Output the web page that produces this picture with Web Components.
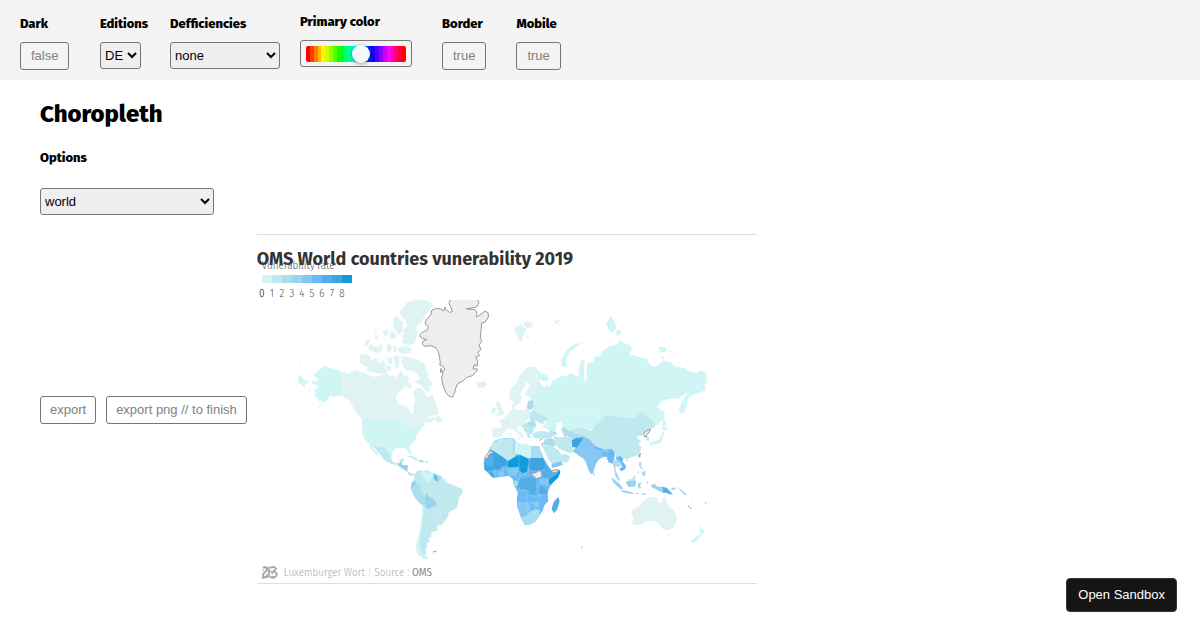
<!DOCTYPE html>
<html lang="en">
<head>
<meta charset="utf-8">
<meta name="viewport" content="width=device-width, initial-scale=1">
<title>Choropleth</title>
<style>
    body {
        margin: 0;
        font-family: "Fira Sans", Lato, sans-serif;
        color: #000;
        background: #fff;
        --button-font: 13px "Liberation Sans", Arial, sans-serif;
    }
</style>
</head>
<body>
<demo-page>
    <tool-bar slot="toolbar">
        <tool-field label="Dark" class="short" spaced><ui-button>false</ui-button></tool-field>
        <tool-field label="Editions" class="short"><ui-select label="Editions" options="DE,FR,EN"></ui-select></tool-field>
        <tool-field label="Defficiencies"><ui-select label="Defficiencies" options="none,protanopia,deuteranopia" style="width: 110px"></ui-select></tool-field>
        <tool-field label="Primary color" spaced raised><hue-slider value="56"></hue-slider></tool-field>
        <tool-field label="Border" spaced><ui-button>true</ui-button></tool-field>
        <tool-field label="Mobile" spaced><ui-button>true</ui-button></tool-field>
    </tool-bar>
    <ui-select slot="options" label="Map" options="world,europe,luxembourg" style="width: 174px"></ui-select>
    <ui-button slot="actions" tight>export</ui-button>
    <ui-button slot="actions" tight>export png // to finish</ui-button>
    <chart-frame slot="chart" heading="OMS World countries vunerability 2019" source="OMS">
        <color-legend slot="legend" label="Vunerability rate"></color-legend>
        <world-map></world-map>
    </chart-frame>
    <sandbox-button slot="floating"></sandbox-button>
</demo-page>

<script>
const SCALE = ['#d0f5f5', '#bfe9ef', '#abdeed', '#9bd2ef', '#84c8f3', '#6bbaf5', '#55ade8', '#3ca4e0', '#109bdb'];

class DemoPage extends HTMLElement {
    constructor() {
        super();
        this.attachShadow({ mode: 'open' });
        this.shadowRoot.innerHTML = `
            <style>
                :host { display: block; }
                main { padding: 20px 40px; }
                h1 { margin: 0; font-size: 24px; line-height: 28px; font-weight: 800; }
                h2 { margin: 20px 0; font-size: 13px; line-height: 20px; font-weight: 800; }
                .row { display: flex; align-items: center; gap: 10px; margin-top: 19px; }
                .options { display: flex; }
                .actions { display: flex; flex: none; gap: 10px; padding-top: 2px; }
            </style>
            <slot name="toolbar"></slot>
            <main>
                <h1>Choropleth</h1>
                <h2>Options</h2>
                <div class="options"><slot name="options"></slot></div>
                <div class="row">
                    <div class="actions"><slot name="actions"></slot></div>
                    <slot name="chart"></slot>
                </div>
            </main>
            <slot name="floating"></slot>
        `;
    }
}

class ToolBar extends HTMLElement {
    constructor() {
        super();
        this.attachShadow({ mode: 'open' });
        this.shadowRoot.innerHTML = `
            <style>
                :host {
                    display: flex;
                    gap: 20px;
                    box-sizing: border-box;
                    min-height: 80px;
                    padding: 13px 20px 10px;
                    background: #f4f4f4;
                }
                ::slotted(.short) { width: 50px; }
            </style>
            <slot></slot>
        `;
    }
}

class ToolField extends HTMLElement {
    constructor() {
        super();
        this.attachShadow({ mode: 'open' });
        this.shadowRoot.innerHTML = `
            <style>
                :host { display: flex; flex-direction: column; align-items: flex-start; gap: 7px; }
                :host([spaced]) { margin-right: 10px; }
                :host([raised]) { margin-top: -2px; }
                span { font-size: 13px; line-height: 22px; font-weight: 800; white-space: nowrap; }
            </style>
            <span></span>
            <slot></slot>
        `;
    }

    connectedCallback() {
        this.shadowRoot.querySelector('span').textContent = this.getAttribute('label');
    }
}

class UiButton extends HTMLElement {
    constructor() {
        super();
        this.attachShadow({ mode: 'open' });
        this.shadowRoot.innerHTML = `
            <style>
                :host { display: block; flex: none; }
                button {
                    display: block;
                    height: 28px;
                    padding: 0 10px 2px;
                    font: var(--button-font);
                    color: #808080;
                    background: transparent;
                    border: 1px solid #767676;
                    border-radius: 3px;
                    cursor: pointer;
                }
                :host([tight]) button { padding: 0 9px 2px; }
                button:hover { color: #333; }
            </style>
            <button type="button"><slot></slot></button>
        `;
    }
}

class UiSelect extends HTMLElement {
    constructor() {
        super();
        this.attachShadow({ mode: 'open' });
        this.shadowRoot.innerHTML = `
            <style>
                :host { display: block; }
                select {
                    display: block;
                    width: 100%;
                    height: 27px;
                    font: 13px "Liberation Sans", Arial, sans-serif;
                    color: #000;
                    background: #efefef;
                    border: 1px solid #767676;
                    border-radius: 3px;
                }
            </style>
            <select></select>
        `;
    }

    connectedCallback() {
        const select = this.shadowRoot.querySelector('select');
        select.setAttribute('aria-label', this.getAttribute('label'));
        this.getAttribute('options').split(',').forEach(name => select.add(new Option(name)));
    }
}

class HueSlider extends HTMLElement {
    constructor() {
        super();
        this.attachShadow({ mode: 'open' });
        // banded rainbow: one hard-edged stop pair per hue step
        const steps = 26;
        const stops = Array.from({ length: steps }, (_, i) =>
            `hsl(${i * 360 / (steps - 1)} 100% 50%) ${i * 100 / steps}% ${(i + 1) * 100 / steps}%`);
        this.shadowRoot.innerHTML = `
            <style>
                :host {
                    display: flex;
                    align-items: center;
                    box-sizing: border-box;
                    width: 112px;
                    height: 27px;
                    padding: 0 5px;
                    border: 1px solid #767676;
                    border-radius: 3px;
                }
                input {
                    appearance: none;
                    width: 100%;
                    height: 16px;
                    margin: 0;
                    border-radius: 2px;
                    background: linear-gradient(to right, ${stops.join(', ')});
                }
                input::-webkit-slider-thumb {
                    appearance: none;
                    width: 18px;
                    height: 18px;
                    border-radius: 50%;
                    background: #f8f8f8;
                    box-shadow: 0 1px 4px rgba(0, 0, 0, 0.37);
                }
            </style>
            <input type="range" min="0" max="100" aria-label="Primary color">
        `;
    }

    connectedCallback() {
        this.shadowRoot.querySelector('input').value = this.getAttribute('value');
    }
}

class ChartFrame extends HTMLElement {
    constructor() {
        super();
        this.attachShadow({ mode: 'open' });
        this.shadowRoot.innerHTML = `
            <style>
                :host { display: block; flex: 0 1 500px; min-width: 0; }
                figure {
                    position: relative;
                    margin: 0;
                    border-top: 1px solid #ddd;
                    border-bottom: 1px solid #ddd;
                }
                h3 { margin: 0; padding: 12px 0 29px; font-size: 18px; line-height: 24px; font-weight: 700; color: #333; }
                /* the legend lies over the heading */
                .legend { position: absolute; top: 24px; left: 0; }
                figcaption {
                    display: flex;
                    align-items: center;
                    padding: 5px 4px 3px;
                    font-family: "Fira Sans Condensed", "Fira Sans", sans-serif;
                    font-size: 11px;
                    line-height: 15px;
                    font-weight: 300;
                    color: #aaa;
                }
                figcaption svg { width: 17px; height: 13px; margin-right: 6px; }
                b { font-weight: 400; color: #888; }
                i { font-style: normal; color: #bfe9ef; }
            </style>
            <figure>
                <h3></h3>
                <div class="legend"><slot name="legend"></slot></div>
                <slot></slot>
                <figcaption>
                    <svg viewBox="0 0 17 13" fill="none" stroke="#aaa" stroke-width="2" aria-hidden="true">
                        <path d="M2 2C5 0 7 2 5 5C4 7 2 7 2 9C2 12 6 12 8 9M8 1C6 3 9 5 8 8C7 11 4 11 1 12M9 2C12 0 16 1 14 4C13 6 11 5 11 7M11 6C16 5 17 9 14 11C12 12 10 12 9 10M12 12V10"/>
                        <path d="M1 4H3M5 8L9 12M15 2L16 3M5 3L9 6M9 4L12 9" stroke-width="1"/>
                    </svg>
                    <span>Luxemburger Wort <i>|</i> Source : <b></b></span>
                </figcaption>
            </figure>
        `;
    }

    connectedCallback() {
        this.shadowRoot.querySelector('h3').textContent = this.getAttribute('heading');
        this.shadowRoot.querySelector('b').textContent = this.getAttribute('source');
    }
}

class ColorLegend extends HTMLElement {
    constructor() {
        super();
        this.attachShadow({ mode: 'open' });
        this.shadowRoot.innerHTML = `
            <style>
                :host {
                    display: block;
                    font-family: "Fira Sans Condensed", "Fira Sans", sans-serif;
                    font-size: 11px;
                    font-weight: 300;
                    color: #555;
                }
                p { margin: 0 5px; line-height: 14px; }
                .bar { display: flex; margin: 2px 5px 0; }
                .bar span { width: 10px; height: 8px; }
                .ticks { display: flex; margin-top: 5px; line-height: 12px; }
                .ticks span { width: 10px; text-align: center; }
                .ticks span:first-child { color: #000; }
            </style>
            <p></p>
            <div class="bar">${SCALE.map(c => `<span style="background: ${c}"></span>`).join('')}</div>
            <div class="ticks">${SCALE.map((c, i) => `<span>${i}</span>`).join('')}</div>
        `;
    }

    connectedCallback() {
        this.shadowRoot.querySelector('p').textContent = this.getAttribute('label');
    }
}

class WorldMap extends HTMLElement {
    constructor() {
        super();
        this.attachShadow({ mode: 'open' });
        this.shadowRoot.innerHTML = `
            <style>
                :host { display: block; }
                svg { display: block; width: 100%; height: auto; }
                .c0 { fill: #e0f3f3; }
                ${SCALE.map((c, i) => `.c${i + 1} { fill: ${c}; }`).join('\n')}
                .na { fill: #eee; stroke: #999; stroke-width: 3; }
                .line { fill: none; stroke: #fff; stroke-opacity: 0.3; stroke-width: 2; }
                .sea { fill: #fff; }
            </style>
            <svg viewBox="0 0 500 260" role="img" aria-label="World map of vulnerability by country">
                <g transform="translate(-256 -300)">
                    <!-- Alaska, Canada and the arctic islands -->
                    <g transform="translate(290 295) scale(.33333)">
                        <path class="c1" d="M22 237L32 245 40 255 52 258 50 266 40 268 45 276 36 274 28 266 22 268ZM22 211L30 213 26 217ZM52 284L60 284 56 290ZM102 213L116 220 128 222 154 229 154 305 145 302 132 306 122 304 118 300 112 312 104 320 96 322 88 332 78 341 74 342 88 330 98 318 84 318 78 308 70 300 74 290 66 284 82 280 84 272 64 266 62 260 76 258 82 254 76 246 66 238 76 232 84 224 92 218Z"/>
                        <path class="c0" d="M155 229L170 238 180 230 198 225 206 230 222 234 236 240 246 246 258 244 272 240 286 236 296 242 306 240 316 248 322 240 330 226 336 236 340 244 350 240 354 252 350 262 342 268 340 276 326 290 316 300 314 312 320 322 330 330 344 334 352 340 356 352 364 358 368 348 366 334 372 322 372 312 368 300 368 290 372 284 380 278 392 282 402 292 404 304 414 306 424 298 428 310 436 330 444 350 442 357 432 362 424 360 412 366 404 374 416 368 432 370 440 362 450 368 455 378 442 384 436 376 428 376 420 384 404 382 392 390 380 393 372 398 360 406 352 402 350 390 338 382 322 376 310 372 220 372 212 374 200 358 190 342 180 325 170 312 155 305Z"/>
                        <path class="c0" d="M330 60L324 50 336 38 346 24 360 17 380 15 404 16 420 22 424 34 416 46 404 58 396 72 392 84 380 88 376 100 380 112 376 128 370 144 358 150 340 148 332 142 338 130 330 124 340 116 334 108 342 98 350 92 342 84 346 76 336 68ZM308 66L318 62 328 74 338 86 334 104 330 116 322 118 312 104 306 88Z"/>
                        <path class="c0" d="M208 180L226 176 240 186 236 196 252 190 262 196 266 206 272 196 280 200 284 208 280 218 290 224 286 236 270 236 256 234 240 232 226 226 232 216 214 210 206 200ZM232 156L240 146 246 156 256 152 262 158 268 144 274 156 270 172 252 174 244 166 234 168ZM218 150L226 136 238 132 234 144 226 154ZM274 110L290 102 292 116 282 124ZM296 116L304 104 318 124 306 134 298 128ZM286 150L300 146 302 166 290 172ZM306 154L316 150 316 172 308 170ZM318 160L340 152 360 158 362 172 340 176 322 172ZM286 190L302 186 306 204 296 210ZM308 186L322 180 326 200 322 220 312 216ZM250 112L260 114 258 120 250 118ZM252 126L262 124 262 132 252 132ZM284 212L298 212 302 224 290 226Z"/>
                        <path class="c0" d="M332 184L350 186 366 190 384 196 400 206 404 222 414 236 410 248 422 260 424 270 414 276 418 288 410 292 400 282 388 270 376 264 370 258 382 254 388 246 378 238 370 232 356 226 344 224 336 214 330 200ZM342 262L354 262 366 276 352 280 344 276Z"/>
                    </g>
                    <!-- Greenland, Iceland and north west Europe -->
                    <g transform="translate(410 295) scale(.33333)">
                        <path class="na" d="M120 5L114 26 120 38 124 50 116 52 104 44 102 36 98 48 90 42 76 40 62 46 60 58 54 66 46 74 42 86 52 94 50 104 34 112 24 122 34 130 48 134 36 138 34 148 42 154 60 152 74 158 82 170 86 190 88 204 86 210 96 214 102 222 96 230 88 232 90 220 96 234 92 250 96 270 104 292 112 302 124 307 130 296 134 280 140 266 156 258 166 248 184 242 194 232 200 222 186 222 190 208 198 214 200 196 194 186 206 182 200 172 210 164 204 150 212 140 208 130 210 106 212 84 222 82 232 66 232 54 222 48 210 58 196 66 198 52 192 44 166 42 196 36 204 24 196 5Z"/>
                        <path class="c0" d="M312 92L322 94 328 86 338 96 346 104 340 116 334 128 332 142 324 136 318 120 310 106ZM336 84L350 78 364 84 366 94 354 100 344 98ZM346 122L354 120 354 130 348 130ZM192 262L200 266 208 260 224 260 228 268 222 276 208 280 196 276 200 271Z"/>
                        <path class="c0" d="M294 296L302 280 314 268 322 250 334 232 346 220 360 215 376 216 380 226 374 236 378 260 380 280 374 298 360 308 346 304 342 294 352 280 356 266 346 262 340 276 330 290 328 300 334 308 326 324 316 334 308 330 304 316 296 312ZM302 328L312 324 310 344 302 340ZM256 318L266 320 270 334 278 350 280 358 262 364 256 360 264 350 258 340 254 328Z"/>
                        <path class="c1" d="M244 340L254 338 252 354 242 356Z"/>
                    </g>
                    <!-- Russia and Kazakhstan -->
                    <g transform="translate(540 310) scale(.33333)">
                        <path class="c1" d="M-14 178L0 188 18 196 24 206 20 214 4 212 -6 208 -2 220 8 232 20 226 26 232 36 210 48 206 64 198 78 198 90 188 100 196 112 198 118 206 112 180 120 152 130 150 130 170 130 190 130 216 138 208 136 180 140 158 158 158 160 140 178 138 184 122 204 110 216 104 230 104 236 88 246 98 258 102 270 108 272 124 262 134 280 136 296 142 318 146 322 158 330 168 344 170 366 152 388 156 402 168 430 174 450 186 470 188 478 180 496 190 498 214 490 224 494 240 480 246 466 250 448 258 440 268 438 286 428 308 418 312 414 296 420 280 430 264 442 246 424 258 410 266 384 266 362 274 348 292 356 298 368 308 366 326 352 344 342 346 330 330 200 340 158 356 128 364 100 366 84 370 70 352 56 340 44 350 46 362 30 362 4 352 20 330 -10 320 -26 300 -34 284 -30 260 -16 244 -12 210Z"/>
                        <path class="c1" d="M62 166L60 150 68 134 80 118 94 106 116 98 118 102 100 114 86 126 76 144 74 158 80 172 68 172ZM196 38L210 18 220 32 226 54 218 68 204 62ZM226 66L234 56 242 70 226 80ZM352 110L374 112 378 124 358 128ZM382 120L396 124 384 126ZM360 142L370 140 370 146 360 146ZM492 168L498 168 497 174ZM364 300L371 306 370 330 378 344 366 350 364 330ZM38 30L46 34 60 28 54 36 46 42Z"/>
                        <path class="line" stroke-dasharray="8 4" d="M44 330L56 314 72 318 76 302 96 304 120 292 140 302 158 302 166 318 190 326"/>
                    </g>
                    <!-- Asia and Oceania -->
                    <g transform="translate(580 400) scale(.33333)">
                        <path class="c2" d="M-40 92L0 84 32 92 40 80 56 66 64 54 80 46 98 50 118 52 134 54 158 54 172 46 180 34 192 42 204 56 220 66 222 82 210 88 204 94 192 100 180 108 166 108 172 118 182 124 172 132 182 142 176 158 166 168 150 172 138 178 128 174 116 170 104 166 96 150 84 148 68 150 48 142 36 130 24 116 -10 116 -30 110Z"/>
                        <path class="line" stroke-dasharray="8 4" d="M64 58L74 76 100 86 126 90 146 84 164 72 160 58M32 92L-10 98"/>
                        <path class="c5" d="M-24 154L-10 132 0 126 6 110 24 116 36 130 48 142 62 148 76 148 90 146 84 158 78 170 70 170 56 176 46 190 40 206 36 220 30 222 22 210 16 190 8 176 0 172Z"/>
                        <path class="c6" d="M38 138L64 146 64 152 40 144ZM64 154L76 158 78 172 66 168ZM80 152L92 146 100 156 102 168 98 182 102 196 98 196 94 190 84 188 78 176ZM104 170L118 168 128 176 124 184 134 196 134 206 122 214 114 206 124 200 118 188 108 182Z"/>
                        <path class="c3" d="M96 184L106 178 116 184 120 196 112 202 104 198 104 212 110 222 118 240 114 244 104 232 100 214ZM36 216L42 222 40 228 36 226ZM174 186L182 188 180 200 188 208 180 206 174 198ZM182 216L194 212 192 230 184 224ZM168 220L174 210 172 220Z"/>
                        <path class="c4" d="M90 232L102 240 114 250 126 264 122 270 108 258 96 246ZM122 270L140 274 158 278 156 282 138 280 122 275ZM164 279L172 279 172 282 164 282ZM178 281L198 279 188 285ZM136 244L150 240 158 236 166 246 162 260 144 262 136 252ZM170 250L184 248 176 254 182 266 176 262 172 268ZM196 246L200 244 200 254ZM210 254L222 252 230 260 246 260 246 278 232 272 222 266 212 262ZM268 268L280 262 286 264 276 270ZM290 262L302 270 318 284 312 286 300 274ZM330 300L334 304 332 306ZM370 308L378 304 374 312Z"/>
                        <path class="c2" d="M138 240L152 236 160 226 166 234 154 244ZM196 112L204 112 204 124 196 122ZM134 178L142 180 136 186Z"/>
                        <path class="c7" d="M246 260L258 264 266 272 276 284 264 282 256 278 246 278Z"/>
                        <path class="c1" d="M204 128L216 124 232 120 240 108 244 94 250 98 246 114 240 128 226 132 216 134 208 138ZM240 84L248 80 262 86 248 92ZM354 376L362 386 372 392 362 404 356 408 358 396ZM352 404L358 408 346 424 336 430 330 424Z"/>
                        <path class="c0" d="M152 330L168 324 180 314 184 306 196 298 208 292 220 290 232 296 228 306 240 310 246 298 250 290 256 304 264 318 276 330 286 344 288 358 282 374 272 386 260 392 244 386 236 374 226 366 210 362 192 366 180 374 160 376 152 370 158 354 150 340ZM258 402L270 402 264 412Z"/>
                        <path class="na" d="M188 100L196 92 208 88 204 98 196 104 198 110 190 110ZM172 168L178 160 176 172ZM321 318L332 327M0 441L4 443"/>
                    </g>
                    <!-- Europe, Middle East and Africa -->
                    <g transform="translate(470 400) scale(.33333)">
                        <path class="c0" d="M64 86L80 84 98 88 104 92 96 100 92 108 78 114 64 112ZM84 62L98 56 108 46 114 36 126 28 150 30 172 26 178 40 172 58 162 68 164 72 152 80 140 78 138 86 150 98 160 106 156 114 148 108 134 94 124 86 116 84 102 90 90 86 92 72ZM134 116L148 114 146 120ZM116 100L122 100 120 110 116 108Z"/>
                        <path class="c2" d="M152 76L166 68 178 66 192 68 194 82 186 92 188 98 176 104 180 114 170 112 166 98 156 86ZM176 40L186 30 202 38 214 46 228 52 230 60 216 66 220 72 206 70 196 62 176 62Z"/>
                        <path class="c3" d="M168 66L190 62 196 76 178 82ZM170 4L186 0 188 20 178 30 168 26ZM232 90L256 96 258 104 244 104ZM270 86L278 80 292 92 312 100 330 104 344 108 330 114 304 118 288 108 280 110 276 100ZM222 118L240 114 250 120 256 136 246 140 232 134 220 136 216 128Z"/>
                        <path class="c2" d="M184 102L200 94 222 94 240 98 248 106 240 114 216 116 196 116 186 110ZM246 106L260 112 276 112 290 110 302 116 302 138 308 156 296 160 280 152 264 146 254 130ZM214 138L232 134 250 142 262 150 272 164 286 162 298 172 290 186 268 190 246 196 238 186 228 168 218 150Z"/>
                        <path class="sea" d="M256 70L270 66 274 74 266 82 272 96 276 110 264 112 258 98 262 88Z"/>
                        <path class="c8" d="M302 120L316 114 338 112 330 126 318 142 304 142Z"/>
                        <path class="c5" d="M306 150L320 142 334 124 342 112 352 126 360 132 352 158 338 164 326 162 312 158ZM242 192L268 184 276 194 254 202 242 204Z"/>
                        <path class="c6" d="M60 138L70 124 86 116 108 114 128 114 132 124 148 134 160 132 176 138 204 138 208 150 216 170 226 188 236 204 246 216 268 210 262 232 246 248 236 262 230 276 232 304 220 316 216 330 206 346 192 366 174 374 160 374 154 358 146 338 138 320 138 296 140 278 134 264 126 250 126 238 114 228 92 230 68 234 56 224 40 208 38 190 40 176 50 160Z"/>
                        <path class="c2" d="M58 150L62 132 86 116 128 114 128 134 128 158 136 168 112 182 96 172 66 152Z"/>
                        <path class="c1" d="M130 124L148 134 160 130 180 138 180 174 168 174 148 164 130 162Z"/>
                        <path class="c3" d="M180 138L204 138 208 150 214 174 180 174ZM126 244L134 240 142 246 138 258 128 258ZM148 352L160 350 176 336 194 326 206 330 206 346 192 366 174 374 160 374Z"/>
                        <path class="c8" d="M42 180L68 154 96 172 110 184 108 196 94 200 84 210 70 208 60 212 40 206ZM178 174L214 174 224 192 218 206 206 212 180 210 172 200 174 184ZM52 212L66 222 70 234 60 228ZM40 206L54 208 54 214 44 212Z"/>
                        <path class="c9" d="M110 184L136 168 148 166 168 174 174 184 170 200 170 214 156 220 146 212 144 200 118 202 108 200ZM234 238L242 232 256 222 266 210 268 218 260 234 240 252 234 250Z"/>
                        <path class="c7" d="M42 180L54 170 68 156 68 200 44 200ZM214 216L224 194 238 210 250 220 240 234 220 234ZM146 238L178 230 194 236 196 258 194 284 180 286 168 270 150 268 140 262ZM206 254L228 270 230 284 206 282ZM262 290L266 304 258 330 248 340 242 326 248 306Z"/>
                        <path class="c5" d="M108 206L142 204 142 216 132 228 114 228ZM84 216L96 214 96 230 86 230ZM138 310L178 308 180 322 172 340 158 350 148 350ZM208 236L232 236 232 258 210 252ZM184 310L206 304 204 322 192 324Z"/>
                        <path class="line" d="M90 118L88 132 60 150M110 184L108 206M144 168L144 204M172 200L170 216 146 230 142 246M178 174L172 200M140 270L166 272 170 290 168 308 138 310M180 286L196 290 210 284 230 284M178 308L196 306 206 296 206 284M196 258L206 254 208 236M166 310L168 336M96 200L98 228M84 210L84 230M70 208L72 232M110 42L124 54 120 84M140 30L142 52 126 58M162 68L142 66"/>
                        <path class="na" d="M178 216L188 220 198 216 206 210 212 220 212 232 196 236 186 228ZM242 212L262 208 260 216 244 218ZM40 176L50 160 56 154 66 152 64 158 54 164 52 172 42 178ZM206 121L212 118M214 130L214 138M163 90L166 92"/>
                    </g>
                    <!-- Central and South America -->
                    <g transform="translate(350 405) scale(.33333)">
                        <path class="c1" d="M40 42L130 42 142 46 158 52 170 60 172 72 180 76 192 68 200 62 216 56 226 56 214 66 206 76 200 86 194 96 196 104 188 112 178 120 176 128 180 138 182 150 176 148 168 132 158 128 146 130 134 130 126 138 122 148 112 140 106 132 98 124 88 126 74 122 62 118 52 114 44 106 36 94 32 80 34 60 32 46Z"/>
                        <path class="c2" d="M56 116L74 122 88 126 98 124 106 132 112 140 122 148 120 158 124 168 134 174 144 174 146 166 154 160 160 164 156 172 150 174 146 182 136 180 124 178 110 172 98 164 90 152 78 138 70 128 62 120 66 132 76 142 84 152 78 150 68 140 62 132ZM170 154L182 152 196 160 204 166 194 166 184 160ZM190 170L196 170 194 173Z"/>
                        <path class="c4" d="M140 180L146 174 152 172 154 180 168 180 172 184 168 200 156 192 146 186ZM204 166L212 164 212 172 206 171Z"/>
                        <path class="c3" d="M166 198L172 200 180 206 190 206 192 212 186 210 178 212 172 206ZM213 166L222 168 220 172 213 172Z"/>
                        <path class="c2" d="M190 208L196 200 208 194 214 198 224 196 234 198 246 204 256 208 268 212 280 222 286 232 300 238 314 244 330 250 336 258 330 270 322 280 322 294 318 308 306 316 294 322 290 336 280 350 270 360 260 362 258 368 262 376 246 380 240 384 242 394 232 400 236 410 226 418 230 426 224 432 226 444 222 450 232 460 220 462 206 452 198 442 196 426 198 410 204 392 208 370 212 344 214 320 216 304 204 292 192 278 184 262 178 250 180 240 184 232 190 222Z"/>
                        <path class="c1" d="M214 302L220 312 218 330 214 350 212 372 208 392 206 412 208 432 216 448 228 458 220 462 206 452 198 442 196 426 198 410 204 392 208 370 212 344 214 320ZM210 198L250 206 246 216 240 222 234 230 226 230 220 218 210 212ZM272 216L280 222 276 228 271 226Z"/>
                        <path class="c3" d="M180 250L192 246 200 236 212 240 206 252 210 262 218 268 222 284 216 302 204 292 192 278 184 262ZM260 212L270 214 270 226 262 226Z"/>
                        <path class="c4" d="M182 232L192 228 198 236 190 246 180 248ZM222 272L230 266 232 274 244 280 254 290 258 300 242 306 238 312 226 310 220 296Z"/>
                        <path class="c6" d="M248 204L258 212 262 228 254 228 248 218Z"/>
                        <path class="line" d="M220 218L218 236 212 240M240 312L256 316 260 330 254 346 262 360M258 302L266 320 270 330 260 330"/>
                        <path class="na" d="M226 171L230 171M246 441L256 439"/>
                    </g>
                </g>
            </svg>
        `;
    }
}

class SandboxButton extends HTMLElement {
    constructor() {
        super();
        this.attachShadow({ mode: 'open' });
        this.shadowRoot.innerHTML = `
            <style>
                :host { position: fixed; right: 23px; bottom: 18px; display: block; }
                button {
                    display: block;
                    height: 34px;
                    padding: 0 11px 2px;
                    font: var(--button-font);
                    color: #fff;
                    background: #151515;
                    border: 1px solid #343434;
                    border-radius: 4px;
                    cursor: pointer;
                }
            </style>
            <button type="button">Open Sandbox</button>
        `;
    }
}

customElements.define('demo-page', DemoPage);
customElements.define('tool-bar', ToolBar);
customElements.define('tool-field', ToolField);
customElements.define('ui-button', UiButton);
customElements.define('ui-select', UiSelect);
customElements.define('hue-slider', HueSlider);
customElements.define('chart-frame', ChartFrame);
customElements.define('color-legend', ColorLegend);
customElements.define('world-map', WorldMap);
customElements.define('sandbox-button', SandboxButton);
</script>
</body>
</html>
